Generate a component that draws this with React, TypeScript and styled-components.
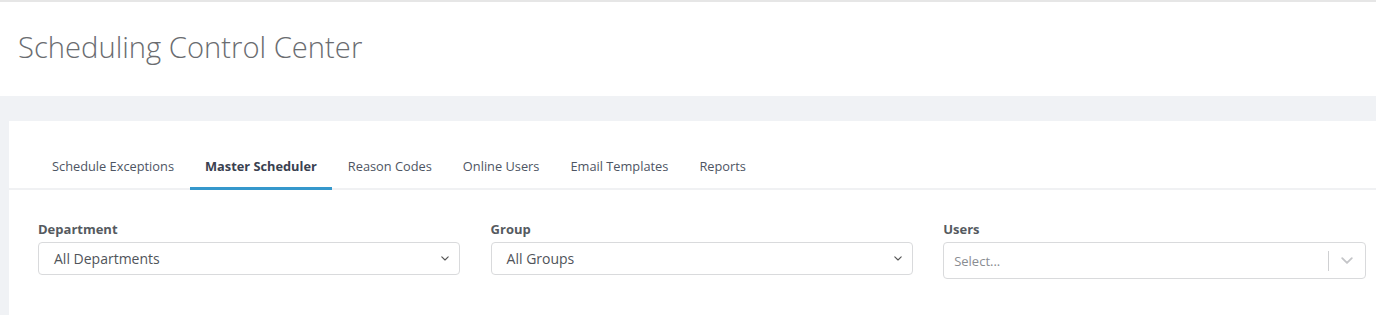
import React from "react";
import styled, { createGlobalStyle } from "styled-components";

const Global = createGlobalStyle`
  html, body { margin: 0; padding: 0; background: #f0f2f5; }
  body { font-family: "Open Sans", "Liberation Sans", sans-serif; }
  * { box-sizing: border-box; }
`;

const Page = styled.div`
  display: flex;
  flex-direction: column;
  min-height: 315px;
`;

const Header = styled.header`
  background: #fff;
  border-top: 2px solid #e6e6e6;
  height: 96px;
  padding: 25px 18px 0;
`;

const Title = styled.h1`
  margin: 0;
  font-weight: 300;
  font-size: 29.2px;
  line-height: 40px;
  color: #6a6c70;
  letter-spacing: 0;
`;

const Body = styled.div`
  flex: 1;
  padding: 25px 0 0 9px;
  display: flex;
`;

const Card = styled.section`
  flex: 1;
  background: #fff;
  padding-top: 24px;
  min-height: 194px;
`;

const Tabs = styled.nav`
  display: flex;
  padding-left: 27.5px;
  border-bottom: 2px solid #f0f1f3;
`;

const Tab = styled.div<{ $active?: boolean }>`
  padding: 12px 15.5px 12px;
  font-size: 12.8px;
  line-height: 18px;
  color: ${(p) => (p.$active ? "#3a4150" : "#4e5563")};
  font-weight: ${(p) => (p.$active ? 700 : 400)};
  margin-bottom: -2px;
  border-bottom: 3px solid ${(p) => (p.$active ? "#3598cc" : "transparent")};
  white-space: nowrap;
`;

const Filters = styled.div`
  display: grid;
  grid-template-columns: repeat(3, 422.4px);
  column-gap: 30.2px;
  padding: 30px 0 0 29px;
`;

const Field = styled.div`
  display: flex;
  flex-direction: column;
`;

const Label = styled.label`
  font-size: 13px;
  font-weight: 700;
  color: #555a60;
  line-height: 18px;
  margin-bottom: 4px;
`;

const SelectBox = styled.div`
  height: 33px;
  border: 1px solid #d9dadc;
  border-radius: 4px;
  display: flex;
  align-items: center;
  padding: 0 10px 0 15px;
  font-size: 14px;
  color: #50545a;
  justify-content: space-between;
`;

const MultiBox = styled.div`
  height: 37px;
  border: 1px solid #d9dadc;
  border-radius: 4px;
  display: flex;
  align-items: center;
  padding-left: 10px;
  font-size: 13px;
  color: #8a8d92;
`;

const Placeholder = styled.span`
  flex: 1;
`;

const Sep = styled.span`
  width: 1px;
  height: 20px;
  background: #cfd0d2;
`;

const Indicator = styled.span`
  width: 36px;
  display: flex;
  justify-content: center;
  align-items: center;
`;

const Chevron = ({ color = "#555", size = 10, stroke = 1.8 }: { color?: string; size?: number; stroke?: number }) => (
  <svg width={size} height={size * 0.6} viewBox="0 0 10 6" fill="none">
    <path d="M1 1l4 4 4-4" stroke={color} strokeWidth={stroke} strokeLinecap="round" strokeLinejoin="round" />
  </svg>
);

export default function App() {
  const tabs = ["Schedule Exceptions", "Master Scheduler", "Reason Codes", "Online Users", "Email Templates", "Reports"];
  return (
    <Page>
      <Global />
      <Header>
        <Title>Scheduling Control Center</Title>
      </Header>
      <Body>
        <Card>
          <Tabs>
            {tabs.map((t) => (
              <Tab key={t} $active={t === "Master Scheduler"}>
                {t}
              </Tab>
            ))}
          </Tabs>
          <Filters>
            <Field>
              <Label>Department</Label>
              <SelectBox>
                <span>All Departments</span>
                <Chevron color="#555" size={8} stroke={1.4} />
              </SelectBox>
            </Field>
            <Field>
              <Label>Group</Label>
              <SelectBox>
                <span>All Groups</span>
                <Chevron color="#555" size={8} stroke={1.4} />
              </SelectBox>
            </Field>
            <Field>
              <Label>Users</Label>
              <MultiBox>
                <Placeholder>Select...</Placeholder>
                <Sep />
                <Indicator>
                  <Chevron color="#c4c5c8" size={12} stroke={1.5} />
                </Indicator>
              </MultiBox>
            </Field>
          </Filters>
        </Card>
      </Body>
    </Page>
  );
}
